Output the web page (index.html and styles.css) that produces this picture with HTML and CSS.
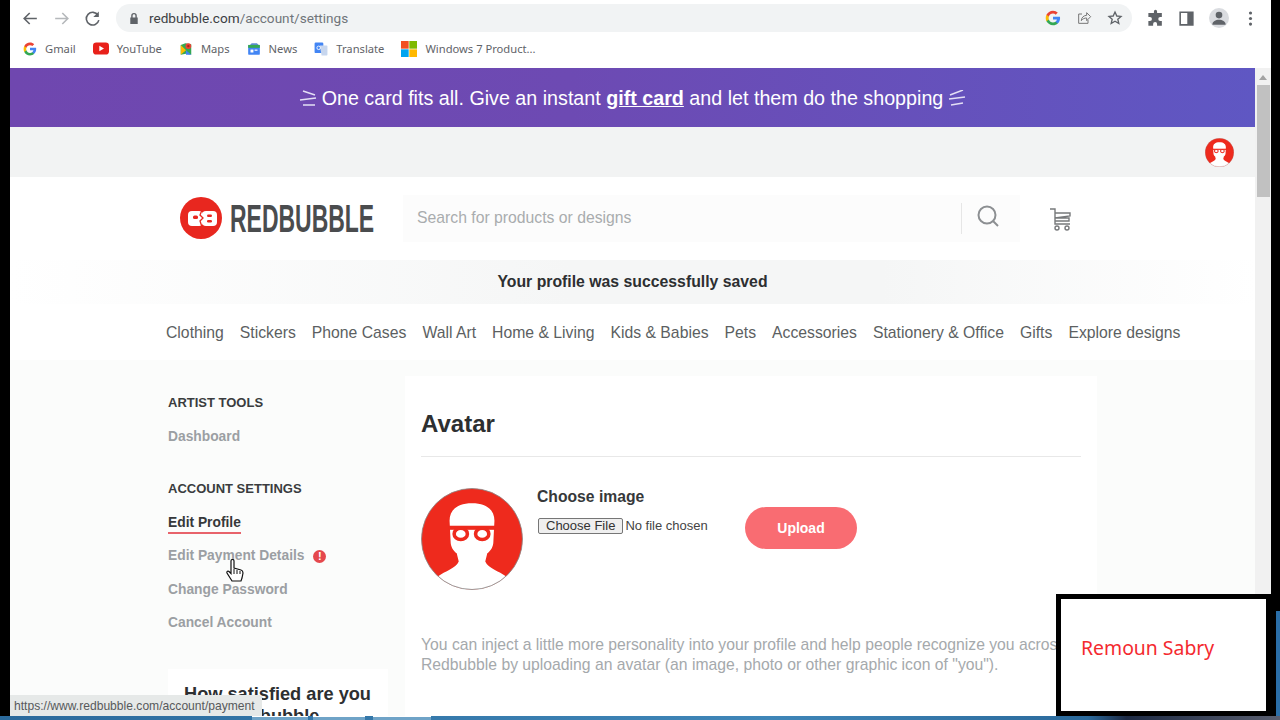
FILE: index.html
```html
<!DOCTYPE html>
<html lang="en">

<head>
    <meta charset="UTF-8">
    <meta name="viewport" content="width=device-width, initial-scale=1.0">
    <title>Redbubble - Account Settings</title>
    <link rel="stylesheet" href="styles.css">
</head>

<body>
    <svg class="sprites" width="0" height="0">
        <symbol id="avatar" viewBox="0 0 100 100">
            <clipPath id="avatarClip"><circle cx="50" cy="50" r="49.5"/></clipPath>
            <g clip-path="url(#avatarClip)">
                <rect width="100" height="100" fill="#ee2a1d"/>
                <path fill="#fff" d="M50 15C35 15 28 22 28 32L29 52C29 58 32 62 35 64L37 72C34 79 24 81 16 87L16 100L84 100L84 87C76 81 66 79 63 72L65 64C68 62 71 58 71 52L72 32C72 22 65 15 50 15Z"/>
                <rect x="27" y="37" width="46" height="4" fill="#ee2a1d"/>
                <ellipse cx="39" cy="45" rx="6.500" ry="5.500" fill="#fff" stroke="#ee2a1d" stroke-width="3.500"/>
                <ellipse cx="60" cy="45" rx="6.500" ry="5.500" fill="#fff" stroke="#ee2a1d" stroke-width="3.500"/>
            </g>
            <circle cx="50" cy="50" r="49.5" fill="none" stroke="#888" stroke-width=".8"/>
        </symbol>
        <symbol id="g-logo" viewBox="0 0 24 24">
            <path fill="#4285f4" d="M22.6 12.2c0-.8-.1-1.500-.2-2.200H12v4.200h5.900c-.3 1.400-1 2.500-2.200 3.300v2.700h3.500c2.100-1.900 3.400-4.700 3.400-8z"/>
            <path fill="#34a853" d="M12 23c3 0 5.400-1 7.200-2.700l-3.500-2.700c-1 .7-2.200 1.100-3.700 1.100-2.900 0-5.300-1.900-6.200-4.500H2.200v2.800C4 20.500 7.700 23 12 23z"/>
            <path fill="#fbbc05" d="M5.800 14.200c-.5-1.400-.5-3 0-4.400V7H2.200c-1.500 3-1.500 7 0 10z"/>
            <path fill="#ea4335" d="M12 5.400c1.600 0 3 .5 4.100 1.600l3.100-3.100C17.400 2.100 14.900 1 12 1 7.700 1 4 3.500 2.200 7l3.600 2.800C6.700 7.300 9.100 5.400 12 5.400z"/>
        </symbol>
    </svg>

    <div class="screen">
        <div class="window">
            <div class="toolbar">
                <svg class="tool-icon" viewBox="0 0 24 24"><path d="M20 12H5M11 5l-7 7 7 7" class="line"/></svg>
                <svg class="tool-icon faint" viewBox="0 0 24 24"><path d="M4 12h15M13 5l7 7-7 7" class="line"/></svg>
                <svg class="tool-icon" viewBox="0 0 24 24"><path d="M19 8a8 8 0 1 0 1 6" class="line"/><path d="M20 3v7h-7z" class="solid"/></svg>
                <div class="omnibox">
                    <svg class="lock" viewBox="0 0 12 14"><path d="M3 6V4a3 3 0 0 1 6 0v2h1v7H2V6zm1.500 0h3V4a1.500 1.500 0 0 0-3 0z" class="solid"/></svg>
                    <span class="url"><b>redbubble.com</b>/account/settings</span>
                    <svg class="omni-icon" viewBox="0 0 24 24"><use href="#g-logo"/></svg>
                    <svg class="omni-icon" viewBox="0 0 24 24"><path d="M9 6H4v14h14v-5" class="thin"/><path d="M8 16c0-5 4-8 8-8V4l6 6-6 6v-4c-3 0-6 1-8 4z" class="thin"/></svg>
                    <svg class="omni-icon" viewBox="0 0 24 24"><path d="M12 3l2.700 6 6.300.6-4.800 4.200 1.500 6.400L12 16.800 6.300 20.200l1.500-6.400L3 9.600 9.300 9z" class="line"/></svg>
                </div>
                <div class="tool-right">
                    <svg class="tool-icon" viewBox="0 0 24 24"><path d="M10 3a2 2 0 0 1 4 0v2h6v5h-2a2.500 2.500 0 0 0 0 5h2v6h-6v-2a2.500 2.500 0 0 0-5 0v2H3v-6h2a2.500 2.500 0 0 0 0-5H3V5h7z" class="solid"/></svg>
                    <svg class="tool-icon" viewBox="0 0 24 24"><path d="M4 4h16v16H4z" class="line"/><path d="M13 4h7v16h-7z" class="solid"/></svg>
                    <span class="profile"><svg viewBox="0 0 24 24"><circle cx="12" cy="8.500" r="4" class="solid"/><path d="M4 20c0-4 4-6 8-6s8 2 8 6z" class="solid"/></svg></span>
                    <svg class="tool-icon" viewBox="0 0 24 24"><circle cx="12" cy="5" r="2" class="solid"/><circle cx="12" cy="12" r="2" class="solid"/><circle cx="12" cy="19" r="2" class="solid"/></svg>
                </div>
            </div>

            <div class="bookmarks">
                <a class="bookmark"><svg class="bm-icon" viewBox="0 0 24 24"><use href="#g-logo"/></svg>Gmail</a>
                <a class="bookmark"><svg class="bm-icon wide" viewBox="0 0 24 18"><rect width="24" height="18" rx="5" fill="#e8201a"/><path d="M9.500 5l7 4-7 4z" fill="#fff"/></svg>YouTube</a>
                <a class="bookmark"><svg class="bm-icon" viewBox="0 0 24 24"><path d="M3 5l8-3 10 2v18l-9-2-9 2z" fill="#34a853"/><path d="M3 5l9 9-9 8z" fill="#fbbc05"/><path d="M12 14l9 8h-9z" fill="#4285f4"/><circle cx="16" cy="7" r="5" fill="#ea4335"/><circle cx="16" cy="7" r="2" fill="#a52714"/></svg>Maps</a>
                <a class="bookmark"><svg class="bm-icon" viewBox="0 0 24 24"><path d="M5 5l3-3h9l3 3z" fill="#5f8dd3"/><rect x="2" y="5" width="20" height="17" rx="2" fill="#4285f4"/><rect x="2" y="5" width="20" height="5" fill="#34a853"/><rect x="6" y="13" width="5" height="5" fill="#fff"/><rect x="13" y="13" width="5" height="2" fill="#fff"/></svg>News</a>
                <a class="bookmark"><svg class="bm-icon" viewBox="0 0 24 24"><rect x="1" y="1" width="15" height="18" rx="2" fill="#4285f4"/><path d="M10 6h12a1 1 0 0 1 1 1v15a1 1 0 0 1-1 1H13z" fill="#c7d6ee"/><circle cx="8" cy="10" r="3" fill="none" stroke="#fff" stroke-width="1.500"/></svg>Translate</a>
                <a class="bookmark"><svg class="bm-icon large" viewBox="0 0 24 24"><rect width="11.500" height="11.500" fill="#f25022"/><rect x="12.500" width="11.500" height="11.500" fill="#7fba00"/><rect y="12.500" width="11.500" height="11.500" fill="#00a4ef"/><rect x="12.500" y="12.500" width="11.500" height="11.500" fill="#ffb900"/></svg>Windows 7 Product...</a>
            </div>

            <div class="viewport">
                <div class="page">
                    <div class="promo">
                        <svg class="spark" viewBox="0 0 20 16"><path d="M4 1L16 5M1 10L17 8M4 15H16"/></svg>
                        <span>One card fits all. Give an instant <a class="promo-link">gift card</a> and let them do the shopping</span>
                        <svg class="spark" viewBox="0 0 20 16"><path d="M4 5L17 0M3 9L19 7M5 15L17 13"/></svg>
                    </div>

                    <div class="user-bar">
                        <svg class="user-avatar"><use href="#avatar"/></svg>
                    </div>

                    <header class="site-header">
                        <a class="logo">
                            <svg class="logo-mark" viewBox="0 0 42 42">
                                <circle cx="21" cy="21" r="21" fill="#e8271f"/>
                                <rect x="8" y="14" width="15" height="15" rx="4" fill="#fff"/>
                                <rect x="22" y="14" width="15" height="15" rx="4" fill="#fff"/>
                                <rect x="13" y="18.500" width="5" height="3.500" rx="1.500" fill="#e8271f"/>
                                <rect x="27" y="17.500" width="5" height="2.500" rx="1.200" fill="#e8271f"/>
                                <rect x="27" y="23" width="5" height="2.500" rx="1.200" fill="#e8271f"/>
                                <path d="M22 13l-2 5 3 3-3 3 2 6" fill="none" stroke="#e8271f" stroke-width="1.300"/>
                            </svg>
                            <span class="wordmark">REDBUBBLE</span>
                        </a>
                        <div class="search">
                            <span class="search-text">Search for products or designs</span>
                            <span class="search-btn">
                                <svg viewBox="0 0 22 22"><circle cx="10" cy="10" r="8.500"/><path d="M16 16l5 5"/></svg>
                            </span>
                        </div>
                        <svg class="cart" viewBox="0 0 24 24"><path d="M2 1h5v15h15M7 5h15v3l-15 2M7 10h14v3H7"/><circle cx="9" cy="20" r="2"/><circle cx="19" cy="20" r="2"/></svg>
                    </header>

                    <div class="notice">Your profile was successfully saved</div>

                    <nav class="main-nav">
                        <a>Clothing</a>
                        <a>Stickers</a>
                        <a>Phone Cases</a>
                        <a>Wall Art</a>
                        <a>Home &amp; Living</a>
                        <a>Kids &amp; Babies</a>
                        <a>Pets</a>
                        <a>Accessories</a>
                        <a>Stationery &amp; Office</a>
                        <a>Gifts</a>
                        <a>Explore designs</a>
                    </nav>

                    <div class="content">
                        <aside class="sidebar">
                            <h5>ARTIST TOOLS</h5>
                            <a class="side-link">Dashboard</a>
                            <h5 class="second">ACCOUNT SETTINGS</h5>
                            <a class="side-link active"><span>Edit Profile</span></a>
                            <a class="side-link">Edit Payment Details <i class="alert">!</i></a>
                            <a class="side-link">Change Password</a>
                            <a class="side-link">Cancel Account</a>
                            <div class="survey">How satisfied are you with Redbubble</div>
                        </aside>

                        <main class="card">
                            <h2>Avatar</h2>
                            <div class="avatar-row">
                                <svg class="big-avatar"><use href="#avatar"/></svg>
                                <div class="chooser">
                                    <label for="avatarFile">Choose image</label>
                                    <input type="file" id="avatarFile">
                                </div>
                                <button type="button" class="btn-upload">Upload</button>
                            </div>
                            <p class="help">You can inject a little more personality into your profile and help people recognize you across Redbubble by uploading an avatar (an image, photo or other graphic icon of "you").</p>
                        </main>
                    </div>
                </div>

                <div class="scrollbar">
                    <span class="arrow"></span>
                    <span class="thumb"></span>
                </div>

                <div class="status">https://www.redbubble.com/account/payment</div>

                <svg class="cursor" viewBox="0 0 18 23"><path d="M5 2a1.500 1.500 0 0 1 3 0v7l7 2c1.500.5 2 1.500 2 3l-1 5-1 3H6l-5-8c-.5-1.500 1-2.500 2-1.500l2 2z" fill="#fff" stroke="#111" stroke-width="1.200"/><path d="M8 10v5M11 11v4M14 12v3" stroke="#111"/></svg>
            </div>
        </div>

        <div class="taskbar">
            <span class="task task-a"></span>
            <span class="task task-b"></span>
            <span class="task task-c"></span>
        </div>
        <div class="desk-edge"></div>

        <div class="name-box">Remoun Sabry</div>
    </div>
</body>

</html>
```

FILE: styles.css
```css
* {
    box-sizing: border-box;
}

html,
body {
    margin: 0;
    height: 100%;
    overflow: hidden;
    background: #000;
}

body {
    font-family: "Liberation Sans", Arial, sans-serif;
}

.sprites {
    position: absolute;
}

a {
    color: inherit;
    text-decoration: none;
}

.solid {
    fill: #5f6368;
}

.line {
    fill: none;
    stroke: #5f6368;
    stroke-width: 2;
}

.thin {
    fill: none;
    stroke: #777;
    stroke-width: 1.500;
}

.screen {
    position: relative;
    width: 1280px;
    height: 720px;
    padding: 0 9px 0 10px;
    display: flex;
    flex-direction: column;
    background: #000;
    overflow: hidden;
}

.window {
    flex: 1;
    min-height: 0;
    display: flex;
    flex-direction: column;
    background: #fff;
}

/* browser bars */

.toolbar {
    height: 36px;
    display: flex;
    align-items: center;
    padding-left: 11px;
    padding-right: 11px;
    gap: 12px;
    flex: none;
}

.tool-icon {
    width: 19px;
    height: 19px;
    flex: none;
}

.faint .line {
    stroke: #b5b8bb;
}

.omnibox {
    width: 1020px;
    height: 28px;
    margin-left: 2px;
    border-radius: 14px;
    background: #f1f3f4;
    display: flex;
    align-items: center;
    padding: 0 9px 0 12px;
    font-family: Roboto, sans-serif;
    font-size: 13.600px;
    color: #70757a;
}

.lock {
    width: 12px;
    height: 13px;
    margin-right: 9px;
}

.url {
    flex: 1;
}

.url b {
    font-weight: 400;
    color: #3c4043;
}

.omni-icon {
    width: 16px;
    height: 16px;
    margin-left: 15px;
}

.tool-right {
    display: flex;
    align-items: center;
    gap: 12.500px;
    margin-left: 2px;
}

.profile {
    width: 20px;
    height: 20px;
    border-radius: 50%;
    background: #dadce0;
}

.profile svg {
    display: block;
    width: 20px;
    height: 20px;
}

.bookmarks {
    height: 32px;
    flex: none;
    display: flex;
    align-items: center;
    padding-left: 13px;
    gap: 17px;
    padding-bottom: 9px;
    padding-top: 2px;
    font-family: "Noto Sans", sans-serif;
    font-size: 11.200px;
    color: #5f6368;
}

.bookmark {
    display: flex;
    align-items: center;
    gap: 8px;
}

.bm-icon {
    width: 14px;
    height: 14px;
}

.bm-icon.wide {
    width: 16px;
    height: 13px;
}

.bm-icon.large {
    width: 16px;
    height: 16px;
}

/* page */

.viewport {
    position: relative;
    flex: 1;
    min-height: 0;
    display: flex;
}

.page {
    width: 1245px;
    flex: none;
    overflow: hidden;
    background: #fbfcfb;
}

.scrollbar {
    flex: 1;
    display: flex;
    flex-direction: column;
    align-items: center;
    background: #f1f1f1;
}

.arrow {
    margin-top: 7px;
    border: 4px solid transparent;
    border-top: 0;
    border-bottom: 5px solid #a3a3a3;
}

.thumb {
    margin-top: 5px;
    width: 13px;
    height: 112px;
    background: #c1c1c1;
}

.promo {
    height: 59px;
    padding-top: 1px;
    display: flex;
    align-items: center;
    justify-content: center;
    gap: 3px;
    background: linear-gradient(90deg, #6f47af, #6d4ab3 45%, #5f57c3);
    color: #fff;
    font-size: 19.700px;
}

.promo-link {
    font-weight: 700;
    text-decoration: underline;
}

.spark {
    width: 20px;
    height: 16px;
}

.spark path {
    fill: none;
    stroke: #e4dff5;
    stroke-width: 1.500;
}

.user-bar {
    height: 50px;
    display: flex;
    align-items: center;
    justify-content: flex-end;
    padding-right: 21px;
    background: #f2f3f3;
}

.user-avatar {
    width: 29px;
    height: 29px;
}

.site-header {
    height: 83px;
    display: flex;
    align-items: center;
    padding-left: 170px;
    background: #fff;
}

.logo {
    display: flex;
    align-items: center;
    gap: 8px;
    width: 223px;
    flex: none;
}

.logo-mark {
    width: 42px;
    height: 42px;
    margin-bottom: 2px;
    flex: none;
}

.wordmark {
    display: inline-block;
    font-family: "Liberation Sans Narrow", "Liberation Sans", sans-serif;
    font-weight: 700;
    font-size: 28px;
    line-height: 28px;
    transform: scale(.82, 1.4);
    transform-origin: left center;
    color: #4a4c4e;
}

.search {
    width: 617px;
    height: 47px;
    display: flex;
    align-items: center;
    justify-content: space-between;
    padding-left: 14px;
    background: #fcfcfc;
}

.search-text {
    padding-bottom: 2px;
    font-size: 15.750px;
    color: #a9acae;
}

.search-btn {
    width: 59px;
    height: 31px;
    padding-left: 15px;
    border-left: 1px solid #e6e6e6;
}

.search-btn svg {
    width: 22px;
    height: 22px;
    margin-top: 2px;
}

.search-btn svg * {
    fill: none;
    stroke: #8c8f92;
    stroke-width: 2;
}

.cart {
    width: 24px;
    height: 24px;
    margin-left: 28px;
    margin-top: 3px;
}

.cart * {
    fill: none;
    stroke: #77797b;
    stroke-width: 1.400;
}

.notice {
    height: 44px;
    display: flex;
    align-items: center;
    justify-content: center;
    background: linear-gradient(90deg, #fff, #f5f6f6 45%, #f5f6f6 70%, #fff);
    font-size: 15.800px;
    font-weight: 700;
    color: #2d2f31;
}

.main-nav {
    height: 56px;
    display: flex;
    align-items: center;
    gap: 16px;
    padding-left: 156px;
    padding-top: 1px;
    background: #fff;
    font-size: 15.750px;
    color: #5c5f62;
}

.content {
    display: flex;
    padding: 16px 0 0 158px;
}

.sidebar {
    width: 237px;
    flex: none;
    padding-top: 18px;
    font-size: 13.800px;
    font-weight: 700;
}

.sidebar h5 {
    margin: 0;
    height: 18px;
    font-size: 13px;
    line-height: 18px;
    color: #3a3c3e;
}

.sidebar h5.second {
    margin-top: 34px;
}

.side-link {
    display: block;
    height: 18px;
    line-height: 18px;
    margin-top: 15.500px;
    color: #9b9fa3;
}

.side-link.active {
    color: #36383a;
    margin-top: 16px;
}

.side-link.active span {
    display: inline-block;
    height: 20px;
    border-bottom: 2px solid #e8636b;
}

.alert {
    display: inline-block;
    width: 13px;
    height: 13px;
    margin-left: 5px;
    border-radius: 50%;
    background: #e5484d;
    color: #fff;
    font-size: 11px;
    line-height: 13px;
    font-style: normal;
    text-align: center;
    vertical-align: 0;
}

.survey {
    margin-top: 37px;
    width: 220px;
    padding: 14px 16px 0;
    background: #fff;
    font-size: 18.200px;
    line-height: 22px;
    color: #2d2f31;
}

.card {
    width: 692px;
    height: 400px;
    padding: 0 16px;
    background: #fff;
}

.card h2 {
    margin: 0;
    height: 81px;
    padding-top: 32px;
    border-bottom: 1px solid #e8e8e8;
    font-size: 24px;
    line-height: 32px;
    color: #2d2f31;
}

.avatar-row {
    display: flex;
    align-items: flex-start;
    padding-top: 31px;
}

.big-avatar {
    width: 102px;
    height: 102px;
    flex: none;
}

.chooser {
    width: 208px;
    margin-left: 14px;
}

.chooser label {
    display: block;
    height: 18px;
    font-size: 15.700px;
    line-height: 18px;
    font-weight: 700;
    color: #36383a;
}

.chooser input {
    display: block;
    width: 200px;
    margin-top: 12px;
    margin-left: 1px;
    font-family: "Liberation Sans", sans-serif;
    font-size: 13px;
    line-height: 16px;
    color: #444;
}

.chooser input::file-selector-button {
    height: 16px;
    padding: 0 7px;
    margin-right: 2px;
    border: 1px solid #767676;
    border-radius: 2px;
    background: #efefef;
    font-size: 13px;
    line-height: 14px;
    color: #333;
}

.btn-upload {
    width: 112px;
    height: 42px;
    margin-top: 19px;
    border: none;
    border-radius: 21px;
    background: #f96c72;
    color: #fff;
    font-family: inherit;
    font-size: 14px;
    font-weight: 700;
}

.help {
    margin: 45px 0 0;
    font-size: 15.730px;
    line-height: 20px;
    color: #a5a9ac;
}

/* things on top of the page */

.status {
    position: absolute;
    left: 0;
    bottom: 0;
    width: 252px;
    height: 21px;
    padding: 1px 0 0 4px;
    background: #e6e9e8;
    border-top-right-radius: 3px;
    font-size: 12.100px;
    line-height: 20px;
    color: #57595b;
    white-space: nowrap;
}

.cursor {
    position: absolute;
    left: 216px;
    top: 491px;
    width: 18px;
    height: 23px;
}

.taskbar {
    height: 4px;
    flex: none;
    display: flex;
    padding-left: 252px;
    margin: 0 -9px 0 -10px;
    background: linear-gradient(90deg, #2b6a9c, #3f86b8 60%, #2b6a9c 85%, #1d2a44 88%, #5a5f70);
}

.task {
    border-top: 1px solid #fff;
    background: #6fa3c7;
}

.task-a {
    width: 56px;
}

.task-b {
    width: 52px;
    margin-left: 5px;
}

.task-c {
    width: 58px;
    margin-left: 8px;
}

.desk-edge {
    position: absolute;
    right: 0;
    top: 611px;
    width: 4px;
    height: 105px;
    background: #2a6ea8;
}

.name-box {
    position: absolute;
    left: 1056px;
    top: 594px;
    width: 215px;
    height: 122px;
    padding: 36px 0 0 20px;
    border: 5px solid #000;
    background: #fff;
    font-family: "Noto Sans", sans-serif;
    font-size: 19.400px;
    line-height: 26px;
    color: #f42a2f;
}
```
